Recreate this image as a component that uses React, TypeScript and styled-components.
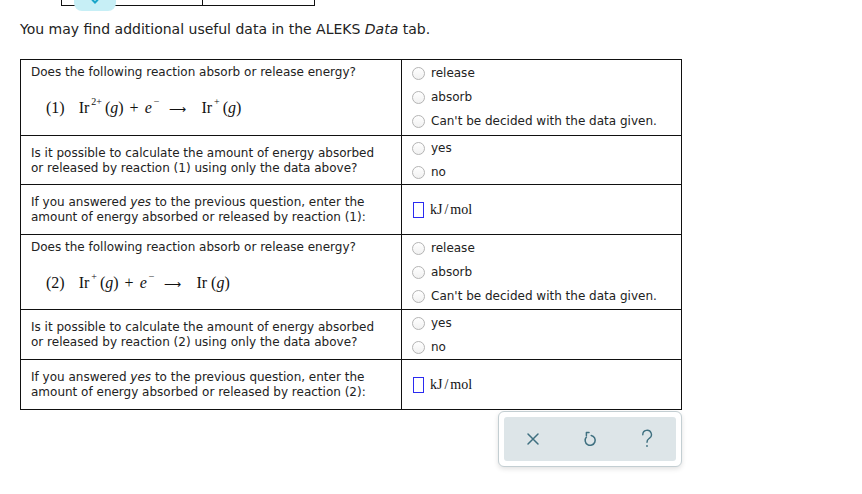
import * as React from 'react'
import styled, { createGlobalStyle } from 'styled-components'

const GlobalStyle = createGlobalStyle`
  body {
    margin: 0;
    background: #ffffff;
    font-family: 'DejaVu Sans', Verdana, sans-serif;
    color: #1a1a1a;
  }
`

const Page = styled.div`
  width: 862px;
  height: 494px;
  overflow: hidden;
`

const TopStrip = styled.div`
  position: relative;
  margin-left: 61px;
  width: 252px;
  height: 5px;
  border: 1px solid #111;
  border-top: none;
  display: grid;
  grid-template-columns: 141px 1fr;
`

const StripCell = styled.div`
  border-right: 1px solid #111;
`

const TabHandle = styled.div`
  position: absolute;
  left: 12px;
  top: 0;
  width: 42px;
  height: 11px;
  background: #c7eff6;
  border-radius: 0 0 8px 8px;
  display: flex;
  justify-content: center;

  svg {
    margin-top: -1px;
  }
`

const Intro = styled.p`
  margin: 15px 0 0 20px;
  font-size: 14px;
  line-height: 17px;
  color: #222;
`

const QTable = styled.div`
  margin: 21px 0 0 20px;
  width: 660px;
  border: 1px solid #111;
  display: grid;
  grid-template-columns: 381px 279px;
  grid-template-rows: 76px 49px 50px 75px 50px 49px;
`

const Cell = styled.div<{ $last?: boolean; $right?: boolean }>`
  border-bottom: ${(p) => (p.$last ? 'none' : '1px solid #111')};
  border-right: ${(p) => (p.$right ? 'none' : '1px solid #111')};
  font-size: 12px;
  line-height: 15px;
  color: #222;
`

const QuestionCell = styled(Cell)`
  padding: 5px 10px 0;
`

const CenteredCell = styled(Cell)`
  padding: 1px 10px 0;
  display: flex;
  flex-direction: column;
  justify-content: center;
`

const Equation = styled.div`
  margin: 17px 0 0 15px;
  font-family: 'Liberation Serif', 'Times New Roman', serif;
  font-size: 16px;
  line-height: 21px;
  color: #111;
  white-space: nowrap;
`

const EqNum = styled.span`
  margin-right: 14px;
`

const Sup = styled.span`
  display: inline-block;
  font-size: 10px;
  transform: translateY(-8px);
  margin: 0 3px 0 2px;
`

const Op = styled.span`
  margin: 0 6px;
`

const Arrow = styled.span`
  margin: 0 15px 0 7px;
  font-size: 12px;
`

const OptionsCell = styled(Cell)`
  padding-top: 1px;
  display: flex;
  flex-direction: column;
`

const Option = styled.label`
  height: 24px;
  display: flex;
  align-items: center;
  padding-left: 10px;
  gap: 6px;
  font-size: 12px;
`

const Radio = styled.span`
  width: 11px;
  height: 11px;
  border-radius: 50%;
  border: 1px solid #b4b4b4;
  background: linear-gradient(#ffffff, #f1f1f1);
`

const AnswerCell = styled(Cell)`
  display: flex;
  align-items: center;
  padding-left: 11px;
  gap: 6px;
`

const AnswerBox = styled.span`
  width: 9px;
  height: 14px;
  border: 1px solid #2b2bf0;
`

const Unit = styled.span`
  font-family: 'Liberation Serif', 'Times New Roman', serif;
  font-size: 14px;
  color: #111;

  i {
    font-style: normal;
    margin: 0 2px;
  }
`

const Actions = styled.div`
  margin: 1px 0 0 498px;
  width: 172px;
  height: 44px;
  padding: 5px;
  border: 1px solid #c3ced2;
  border-radius: 6px;
  box-shadow: 0 2px 5px rgba(0, 0, 0, 0.12);
  background: #fff;
`

const ActionPanel = styled.div`
  height: 100%;
  background: #dde5e8;
  border-radius: 3px;
  display: grid;
  grid-template-columns: repeat(3, 1fr);
  align-items: center;
  justify-items: center;
  color: #3f7080;
`

const IconButton = styled.span`
  display: flex;
  align-items: center;
  justify-content: center;
  width: 24px;
  height: 24px;
`

const Ion = ({ charge }: { charge: string }) => (
  <>
    Ir<Sup>{charge}</Sup>
  </>
)

const Gas = () => (
  <>
    (<i>g</i>)
  </>
)

const Reaction: React.FC<{ n: number; from: string; to?: string }> = ({ n, from, to }) => (
  <Equation>
    <EqNum>({n})</EqNum>
    <Ion charge={from} />
    <Gas />
    <Op>+</Op>
    <i>e</i>
    <Sup>−</Sup>
    <Arrow>⟶</Arrow>
    {to ? <Ion charge={to} /> : <>Ir </>}
    <Gas />
  </Equation>
)

const Options: React.FC<{ items: string[]; last?: boolean }> = ({ items, last }) => (
  <OptionsCell $right $last={last}>
    {items.map((t) => (
      <Option key={t}>
        <Radio />
        {t}
      </Option>
    ))}
  </OptionsCell>
)

const Answer: React.FC<{ last?: boolean }> = ({ last }) => (
  <AnswerCell $right $last={last}>
    <AnswerBox />
    <Unit>
      kJ<i>/</i>mol
    </Unit>
  </AnswerCell>
)

const Block: React.FC<{ n: number; from: string; to?: string; last?: boolean }> = ({ n, from, to, last }) => (
  <>
    <QuestionCell>
      Does the following reaction absorb or release energy?
      <Reaction n={n} from={from} to={to} />
    </QuestionCell>
    <Options items={['release', 'absorb', "Can't be decided with the data given."]} />
    <CenteredCell>
      <div>Is it possible to calculate the amount of energy absorbed</div>
      <div>or released by reaction ({n}) using only the data above?</div>
    </CenteredCell>
    <Options items={['yes', 'no']} />
    <CenteredCell $last={last}>
      <div>
        If you answered <i>yes</i> to the previous question, enter the
      </div>
      <div>amount of energy absorbed or released by reaction ({n}):</div>
    </CenteredCell>
    <Answer last={last} />
  </>
)

const App: React.FC = () => (
  <Page>
    <GlobalStyle />
    <TopStrip>
      <StripCell />
      <div />
      <TabHandle>
        <svg width="10" height="6" viewBox="0 0 10 6">
          <path d="M2.5 1 L5 3.5 L7.5 1" stroke="#1ba6c9" strokeWidth="2" fill="none" strokeLinecap="round" />
        </svg>
      </TabHandle>
    </TopStrip>
    <Intro>
      You may find additional useful data in the ALEKS <i>Data</i> tab.
    </Intro>
    <QTable>
      <Block n={1} from="2+" to="+" />
      <Block n={2} from="+" last />
    </QTable>
    <Actions>
      <ActionPanel>
        <IconButton>
          <svg width="14" height="14" viewBox="0 0 14 14">
            <path d="M2 2 L12 12 M12 2 L2 12" stroke="currentColor" strokeWidth="1.5" strokeLinecap="round" />
          </svg>
        </IconButton>
        <IconButton>
          <svg width="16" height="18" viewBox="0 0 16 18">
            <path
              d="M4.4 7 A5 5 0 1 0 9.2 5.4"
              stroke="currentColor"
              strokeWidth="1.5"
              fill="none"
              strokeLinecap="round"
            />
            <path d="M7 2.6 H4.4 V5.4" stroke="currentColor" strokeWidth="1.5" fill="none" strokeLinecap="round" strokeLinejoin="round" />
          </svg>
        </IconButton>
        <IconButton>
          <svg width="14" height="20" viewBox="0 0 14 20">
            <path
              d="M2.8 5.8 A4.3 4.3 0 1 1 9.3 9.3 C7.8 10.4 7 11.2 7 13.2"
              stroke="currentColor"
              strokeWidth="1.4"
              fill="none"
              strokeLinecap="round"
            />
            <circle cx="7" cy="17" r="0.9" fill="currentColor" />
          </svg>
        </IconButton>
      </ActionPanel>
    </Actions>
  </Page>
)

export default App
